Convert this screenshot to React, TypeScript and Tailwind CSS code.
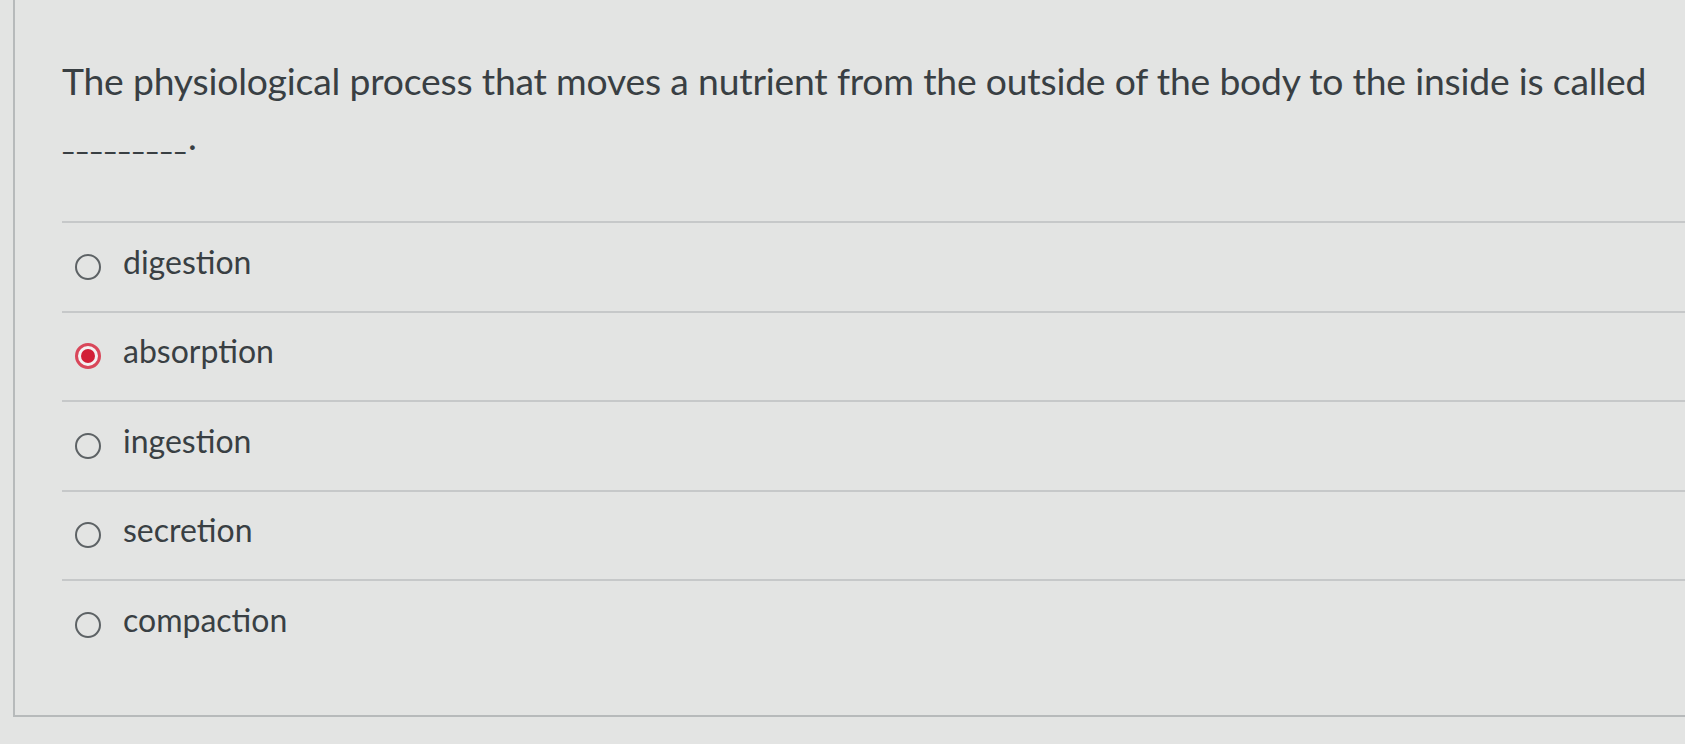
const options = [
  { label: 'digestion', checked: false },
  { label: 'absorption', checked: true },
  { label: 'ingestion', checked: false },
  { label: 'secretion', checked: false },
  { label: 'compaction', checked: false },
]

function Radio({ checked }: { checked: boolean }) {
  if (checked) {
    return (
      <span className="ml-[13px] flex h-[26px] w-[26px] shrink-0 items-center justify-center rounded-full border-[3px] border-[#d9475a] bg-[#f4f1f2]">
        <span className="h-[14px] w-[14px] rounded-full bg-[#d21f37]" />
      </span>
    )
  }
  return (
    <span className="ml-[13px] h-[26px] w-[26px] shrink-0 rounded-full border-[2.5px] border-[#5d6265] bg-transparent" />
  )
}

export default function App() {
  return (
    <div
      className="h-[744px] w-[1685px] overflow-hidden bg-[#e3e4e3] pl-[13px] text-[#393f43]"
      style={{ fontFamily: 'Lato, "Open Sans", sans-serif' }}
    >
      <div className="h-[717px] border-b-2 border-l-2 border-[#b7babb] pl-[47px] pt-[53px]">
        {/* Question */}
        <p className="text-[37.3px] leading-[55px] tracking-[-0.2px]">
          The physiological process that moves a nutrient from the outside of the body to the inside is called
          <br />
          <span className="text-[27px] font-semibold tracking-[1.5px]">_________</span>.
        </p>

        {/* Answer choices */}
        <ul className="mt-[54px]">
          {options.map((opt) => (
            <li
              key={opt.label}
              className="flex h-[89.5px] items-center border-t-2 border-[#c6c8c9]"
            >
              <Radio checked={opt.checked} />
              <span className="mb-[10px] ml-[22px] text-[32px] leading-[40px]">{opt.label}</span>
            </li>
          ))}
        </ul>
      </div>
    </div>
  )
}
